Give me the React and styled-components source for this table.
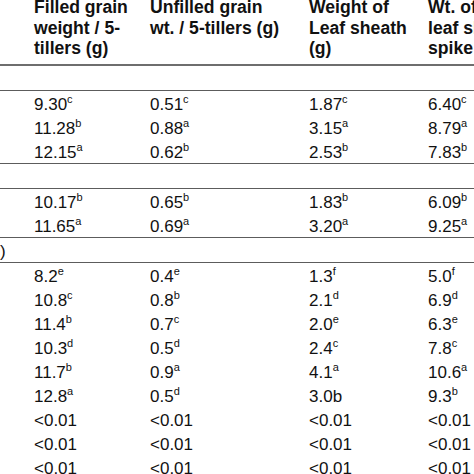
import React from "react";
import styled, { createGlobalStyle } from "styled-components";

const Global = createGlobalStyle`
  html, body { margin: 0; padding: 0; background: #fff; }
  body { width: 474px; height: 474px; overflow: hidden; }
`;

const Sheet = styled.div`
  font-family: "Liberation Sans", Arial, sans-serif;
  color: #111;
  font-size: 17px;
  margin-top: -3px;
  width: 474px;
`;

const Row = styled.div`
  display: grid;
  grid-template-columns: 34px 116px 159px 119px 1fr;
  white-space: nowrap;
  border-bottom: ${(p) => p.$rule || "none"};
`;

const HeadCell = styled.div`
  font-weight: 700;
  font-size: 17.6px;
  line-height: 20.5px;
  padding-bottom: 5px;
`;

const Cell = styled.div`
  height: ${(p) => p.$h || 24}px;
  line-height: 21px;
  padding-top: 3px;
  box-sizing: border-box;
`;

const Label = styled(Cell)`
  padding-left: 0;
`;

const Sup = styled.sup`
  font-size: 11px;
  line-height: 0;
  vertical-align: 7px;
`;

const v = (s) => {
  const m = s.match(/^([\d.<]+)([a-f])?$/);
  if (!m || s === "3.0b") return s;
  return (
    <>
      {m[1]}
      {m[2] && <Sup>{m[2]}</Sup>}
    </>
  );
};

const headers = [
  ["Filled grain", "weight / 5-", "tillers (g)"],
  ["Unfilled grain", "wt. / 5-tillers (g)"],
  ["Weight of", "Leaf sheath", "(g)"],
  ["Wt. of", "leaf sheath +", "spike (g)"],
];

const groups = [
  {
    label: "",
    rows: [
      ["9.30c", "0.51c", "1.87c", "6.40c"],
      ["11.28b", "0.88a", "3.15a", "8.79a"],
      ["12.15a", "0.62b", "2.53b", "7.83b"],
    ],
  },
  {
    label: "",
    rows: [
      ["10.17b", "0.65b", "1.83b", "6.09b"],
      ["11.65a", "0.69a", "3.20a", "9.25a"],
    ],
  },
  {
    label: ")",
    rows: [
      ["8.2e", "0.4e", "1.3f", "5.0f"],
      ["10.8c", "0.8b", "2.1d", "6.9d"],
      ["11.4b", "0.7c", "2.0e", "6.3e"],
      ["10.3d", "0.5d", "2.4c", "7.8c"],
      ["11.7b", "0.9a", "4.1a", "10.6a"],
      ["12.8a", "0.5d", "3.0b", "9.3b"],
      ["<0.01", "<0.01", "<0.01", "<0.01"],
      ["<0.01", "<0.01", "<0.01", "<0.01"],
      ["<0.01", "<0.01", "<0.01", "<0.01"],
    ],
  },
];

const RULE = "1.5px solid #5c5c5c";

export default function App() {
  return (
    <>
      <Global />
      <Sheet>
        <Row $rule="2px solid #6e6e6e">
          <HeadCell />
          {headers.map((h, i) => (
            <HeadCell key={i}>
              {h.map((line, j) => (
                <div key={j}>{line}</div>
              ))}
            </HeadCell>
          ))}
        </Row>
        {groups.map((g, gi) => (
          <React.Fragment key={gi}>
            <Row $rule={RULE}>
              <Label $h={24}>{g.label}</Label>
            </Row>
            {g.rows.map((r, ri) => (
              <Row
                key={ri}
                $rule={ri === g.rows.length - 1 && gi < groups.length - 1 ? RULE : "none"}
              >
                <Cell />
                {r.map((c, ci) => (
                  <Cell key={ci}>{v(c)}</Cell>
                ))}
              </Row>
            ))}
          </React.Fragment>
        ))}
      </Sheet>
    </>
  );
}
